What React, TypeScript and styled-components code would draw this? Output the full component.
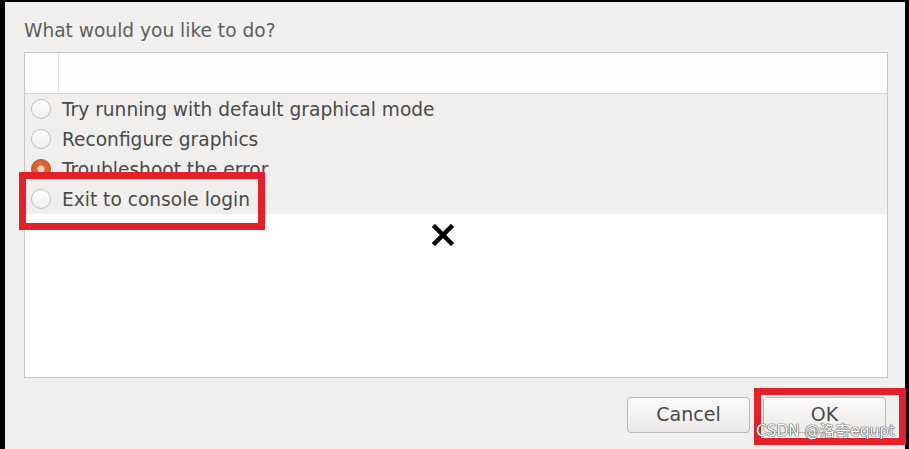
import styled, { createGlobalStyle } from "styled-components";

const GlobalStyle = createGlobalStyle`
    html, body {
        margin: 0;
        padding: 0;
        background: #000;
    }
    body {
        font-family: "DejaVu Sans", "Noto Sans", sans-serif;
    }
`;

const Frame = styled.div`
    position: relative;
    width: 909px;
    height: 449px;
    box-sizing: border-box;
    padding: 2px 4px 0 5px;
    background: #000;
    overflow: hidden;
`;

const Dialog = styled.div`
    height: 100%;
    box-sizing: border-box;
    background: #f1f0ee;
    padding: 17px 19px 0 19px;
    display: flex;
    flex-direction: column;
`;

const Title = styled.div`
    font-size: 18.6px;
    line-height: 24px;
    color: #5e5e5e;
    height: 33px;
`;

const ListBox = styled.div`
    width: 864px;
    height: 326px;
    box-sizing: border-box;
    border: 1px solid #c9c8c6;
    background: #ffffff;
    display: flex;
    flex-direction: column;
`;

const HeaderRow = styled.div`
    display: flex;
    height: 40px;
    border-bottom: 1px solid #d6d5d3;
    background: #fdfdfd;
`;

const HeaderCell = styled.div<{ $width?: number }>`
    ${(p) => (p.$width ? `width: ${p.$width}px;` : "flex: 1;")}
    border-right: ${(p) => (p.$width ? "1px solid #e2e1df" : "none")};
`;

const Rows = styled.div`
    background: #f0efed;
    display: flex;
    flex-direction: column;
`;

const Row = styled.label`
    display: flex;
    align-items: center;
    height: 30px;
    padding-left: 6px;
    gap: 11px;
    font-size: 18.6px;
    color: #4a4a4a;
`;

const Radio = styled.span<{ $checked?: boolean }>`
    width: 20px;
    height: 20px;
    border-radius: 50%;
    box-sizing: border-box;
    flex: none;
    border: 1px solid ${(p) => (p.$checked ? "#b8491c" : "#bdbcba")};
    background: ${(p) =>
        p.$checked
            ? "radial-gradient(circle, #f7d2c0 0 3px, #e2672f 4px, #d65822 100%)"
            : "linear-gradient(#ffffff, #efeeec)"};
`;

const ButtonBar = styled.div`
    display: flex;
    justify-content: flex-end;
    gap: 13px;
    margin-top: 19px;
`;

const Button = styled.button`
    width: 123px;
    height: 36px;
    border: 1px solid #b9b8b6;
    border-radius: 4px;
    background: linear-gradient(#fbfbfa, #ebeae8);
    font-family: "DejaVu Sans", sans-serif;
    font-size: 19px;
    color: #4a4a4a;
    padding: 0 0 2px;
`;

const Marker = styled.div<{ $x: number; $y: number; $w: number; $h: number }>`
    position: absolute;
    left: ${(p) => p.$x}px;
    top: ${(p) => p.$y}px;
    width: ${(p) => p.$w}px;
    height: ${(p) => p.$h}px;
    box-sizing: border-box;
    border: 7px solid #e5202b;
    pointer-events: none;
`;

const Cross = styled.div`
    position: absolute;
    left: 431px;
    top: 222px;
    width: 24px;
    height: 26px;
    display: flex;
    align-items: center;
    justify-content: center;
`;

const Watermark = styled.div`
    position: absolute;
    left: 756px;
    top: 423px;
    font-family: "DejaVu Sans", "Noto Sans CJK SC", sans-serif;
    font-size: 15.3px;
    line-height: 17px;
    color: #ffffff;
    text-shadow: 0 0 1px #444, 0 0 1px #444, 0 0 1px #444;
    white-space: nowrap;
`;

const options = [
    "Try running with default graphical mode",
    "Reconfigure graphics",
    "Troubleshoot the error",
    "Exit to console login",
];

export default function App() {
    return (
        <>
            <GlobalStyle />
            <Frame>
                <Dialog>
                    <Title>What would you like to do?</Title>
                    <ListBox>
                        <HeaderRow>
                            <HeaderCell $width={33} />
                            <HeaderCell />
                        </HeaderRow>
                        <Rows>
                            {options.map((o, i) => (
                                <Row key={o}>
                                    <Radio $checked={i === 2} />
                                    {o}
                                </Row>
                            ))}
                        </Rows>
                    </ListBox>
                    <ButtonBar>
                        <Button>Cancel</Button>
                        <Button>OK</Button>
                    </ButtonBar>
                </Dialog>
                <Marker $x={19} $y={172} $w={246} $h={58} />
                <Marker $x={754} $y={388} $w={152} $h={57} />
                <Cross>
                    <svg width="22" height="22" viewBox="0 0 22 22">
                        <path d="M3 3 L19 19 M19 3 L3 19" stroke="#000" strokeWidth="4.5" strokeLinecap="square" />
                    </svg>
                </Cross>
                <Watermark>CSDN @洛奇equpt</Watermark>
            </Frame>
        </>
    );
}
